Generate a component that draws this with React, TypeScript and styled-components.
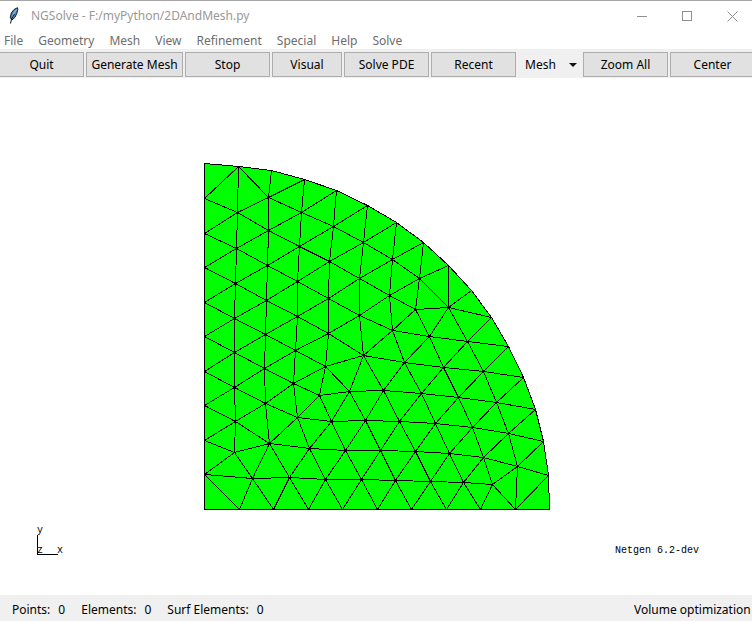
import React from "react";
import styled, { createGlobalStyle } from "styled-components";

const GlobalStyle = createGlobalStyle`
  * { box-sizing: border-box; }
  body {
    margin: 0;
    background: #ffffff;
    color: #000000;
    font-family: "Noto Sans", "Open Sans", sans-serif;
    font-size: 12px;
    line-height: 16px;
  }
  button, select { font: inherit; color: inherit; }
`;

const Window = styled.div`
  display: flex;
  flex-direction: column;
  min-height: 100vh;
  overflow: hidden;
  border-top: 1px solid #a5a5a5;
`;

const TitleBar = styled.header`
  display: flex;
  align-items: center;
  height: 30px;
  padding-left: 7px;
  color: #999999;
`;

const Title = styled.h1`
  flex: 1;
  margin: 0 0 0 10px;
  font-size: 12px;
  font-weight: 400;
  white-space: nowrap;
`;

const WindowButton = styled.button`
  display: grid;
  place-items: center;
  width: 45px;
  height: 28px;
  padding: 0;
  border: 0;
  background: transparent;
`;

const WindowButtons = styled.div`
  display: flex;
  margin-right: -3px;
`;

const MenuBar = styled.nav`
  display: flex;
  align-items: flex-end;
  height: 18px;
  padding-left: 4px;
  gap: 15px;
`;

const MenuItem = styled.button`
  padding: 0;
  border: 0;
  background: transparent;
  color: #6d6d6d;
  white-space: nowrap;
`;

const Toolbar = styled.div`
  display: flex;
  gap: 2px;
  height: 29px;
  margin-left: -1px;
  padding: 3px 0 1px;
  background: #f0f0f0;
`;

const ToolButton = styled.button<{ $width?: number }>`
  flex: none;
  width: ${(p) => p.$width ?? 85}px;
  height: 25px;
  padding: 0;
  border: 1px solid #adadad;
  background: #e1e1e1;
  white-space: nowrap;
`;

const SelectBox = styled.label`
  display: grid;
  flex: none;
  grid-template-columns: 1fr 8px;
  align-items: center;
  width: 63px;
  padding: 0 4px 0 7px;
`;

const ViewSelect = styled.select`
  grid-area: 1 / 1 / 2 / 3;
  appearance: none;
  padding: 0;
  border: 0;
  background: transparent;
`;

const Arrow = styled.svg`
  grid-area: 1 / 2;
  pointer-events: none;
`;

const Canvas = styled.main`
  position: relative;
  display: grid;
  flex: 1;
  place-items: center;
`;

const Axes = styled.svg`
  position: absolute;
  left: 34px;
  bottom: 35px;
  font: 10px "Liberation Mono", monospace;
`;

const Version = styled.span`
  position: absolute;
  right: 53px;
  bottom: 36px;
  font: 10px/16px "Liberation Mono", monospace;
`;

const StatusBar = styled.footer`
  display: flex;
  align-items: center;
  gap: 16px;
  height: 26px;
  padding: 4px 0 0 12px;
  background: #f0f0f0;
  white-space: nowrap;
`;

const Stat = styled.span`
  display: flex;
  gap: 8px;
`;

const Task = styled.span`
  width: 118px;
  margin-left: auto;
  overflow: hidden;
`;

const arc = "204,163 238,166 271,170 304,179 336,190 367,205 396,222 423,242 448,265 471,290 491,317 508,346 523,377 535,409 543,441 548,475 549,509";

const meshLines = [
  "238,166 237,212 236,248 235,283 234,318 234,352 234,387 235,421 234,452",
  "271,170 268,197 268,230 267,265 266,300 265,334 264,368 265,403 269,443",
  "304,179 301,212 299,246 297,281 297,316 295,350 293,383 297,417",
  "336,190 333,226 329,261 328,298 328,333 325,366 319,395",
  "367,205 363,242 359,278 359,315 363,355",
  "396,222 392,259 389,295 392,330",
  "423,242 419,278 415,309",
  "448,265 448,307",
  "204,198 238,166",
  "204,233 237,212 268,197 304,179",
  "204,267 236,248 268,230 301,212 336,190",
  "204,302 235,283 267,265 299,246 333,226 367,205",
  "204,336 234,318 266,300 297,281 329,261 363,242 396,222",
  "204,371 234,352 265,334 297,316 328,298 359,278 392,259 423,242",
  "204,405 234,387 264,368 295,350 328,333 359,315 389,295 419,278 448,265",
  "204,440 235,421 265,403 293,383 325,366 363,355 392,330 415,309 448,307 491,317",
  "448,307 471,290",
  "204,474 234,452 269,443 297,417 319,395 349,391 383,390 421,393 458,397 496,402 535,409",
  "325,366 349,391",
  "238,166 268,197 301,212 333,226 363,242 392,259 419,278 448,307 467,341 483,371 496,402 508,433 517,466 515,509",
  "204,198 237,212 268,230 299,246 329,261 359,278 389,295 415,309 429,336 443,367 458,397 472,427 483,457 492,484 515,509",
  "204,233 236,248 267,265 297,281 328,298 359,315 392,330 429,336 467,341 508,346",
  "204,267 235,283 266,300 297,316 328,333 363,355 404,362 443,367 483,371 523,377",
  "204,302 234,318 265,334 295,350 325,366",
  "204,336 234,352 264,368 293,383 319,395 331,421 345,450 361,479 377,509",
  "204,371 234,387 265,403 297,417 331,421 365,420 399,421 435,423 472,427 508,433 543,441",
  "204,405 235,421 269,443 309,448 345,450 380,450 415,451 449,453 483,457 517,466 548,475",
  "204,440 234,452 252,478 273,509",
  "204,474 252,478 289,477 325,479 361,479 395,480 430,481 463,482 492,484",
  "204,474 239,509 252,478 269,443 289,477 308,509",
  "297,417 309,448 325,479 342,509",
  "349,391 365,420 380,450 395,480 411,509",
  "363,355 383,390 399,421 415,451 430,481 446,509",
  "392,330 404,362 421,393 435,423 449,453 463,482 480,509",
  "273,509 289,477 309,448 331,421 349,391 363,355",
  "308,509 325,479 345,450 365,420 383,390 404,362 429,336 448,307",
  "342,509 361,479 380,450 399,421 421,393 443,367 467,341 491,317",
  "377,509 395,480 415,451 435,423 458,397 483,371 508,346",
  "411,509 430,481 449,453 472,427 496,402 523,377",
  "446,509 463,482 483,457 508,433 535,409",
  "480,509 492,484 517,466 543,441",
  "515,509 548,475",
];

function Mesh() {
  return (
    <svg width="348" height="349" viewBox="202 162 348 349" role="img" aria-label="Quarter disc mesh">
      <g transform="translate(.5 .5)" stroke="#000" fill="none" shapeRendering="crispEdges">
        <polygon points={`${arc} 204,509`} fill="#00ff00" />
        {meshLines.map((points) => (
          <polyline key={points} points={points} />
        ))}
      </g>
    </svg>
  );
}

function Feather() {
  return (
    <svg width="14" height="18" viewBox="0 0 14 18" aria-hidden="true">
      <path d="M10.500.7 7 2.500 4.300 6 3.300 10.500l1.500 2.500 3-2.500 2-4 1-4z" fill="#4b86c4" stroke="#141c28" />
      <path d="M9.500 2.500 7 6 5.500 10" fill="none" stroke="#9dcdf5" />
      <path d="M7.500 7 4.500 12 3.500 16.500" fill="none" stroke="#151515" />
    </svg>
  );
}

const menus = ["File", "Geometry", "Mesh", "View", "Refinement", "Special", "Help", "Solve"];
const tools = [
  { label: "Quit" },
  { label: "Generate Mesh", width: 97 },
  { label: "Stop" },
  { label: "Visual", width: 70 },
  { label: "Solve PDE" },
  { label: "Recent" },
];
const stats = ["Points:", "Elements:", "Surf Elements:"];

export default function App() {
  return (
    <>
      <GlobalStyle />
      <Window>
        <TitleBar>
          <Feather />
          <Title>NGSolve - F:/myPython/2DAndMesh.py</Title>
          <WindowButtons>
            <WindowButton aria-label="Minimize">
              <svg width="11" height="11" stroke="#8f8f8f" shapeRendering="crispEdges"><path d="M0 5.500h10" /></svg>
            </WindowButton>
            <WindowButton aria-label="Maximize">
              <svg width="11" height="11" fill="none" stroke="#8f8f8f" shapeRendering="crispEdges"><path d="M.5.5h9v9h-9z" /></svg>
            </WindowButton>
            <WindowButton aria-label="Close">
              <svg width="11" height="11" stroke="#8f8f8f"><path d="m.5.5 10 10m0-10-10 10" /></svg>
            </WindowButton>
          </WindowButtons>
        </TitleBar>
        <MenuBar>
          {menus.map((name) => <MenuItem key={name}>{name}</MenuItem>)}
        </MenuBar>
        <Toolbar>
          {tools.map((tool) => (
            <ToolButton key={tool.label} $width={tool.width}>{tool.label}</ToolButton>
          ))}
          <SelectBox>
            <ViewSelect aria-label="View mode" defaultValue="Mesh">
              <option>Mesh</option>
            </ViewSelect>
            <Arrow width="8" height="4" viewBox="0 0 8 4"><path d="M0 0h8L4 4z" fill="#111" /></Arrow>
          </SelectBox>
          <ToolButton>Zoom All</ToolButton>
          <ToolButton>Center</ToolButton>
        </Toolbar>
        <Canvas>
          <Mesh />
          <Axes width="32" height="34" viewBox="0 0 32 34">
            <path d="M3.500 9v19.500H24" fill="none" stroke="#000" shapeRendering="crispEdges" />
            <text x="3" y="7">y</text>
            <text x="3" y="27">z</text>
            <text x="23" y="27">x</text>
          </Axes>
          <Version>Netgen 6.2-dev</Version>
        </Canvas>
        <StatusBar>
          {stats.map((label) => (
            <Stat key={label}><span>{label}</span><span>0</span></Stat>
          ))}
          <Task>Volume optimization</Task>
        </StatusBar>
      </Window>
    </>
  );
}
